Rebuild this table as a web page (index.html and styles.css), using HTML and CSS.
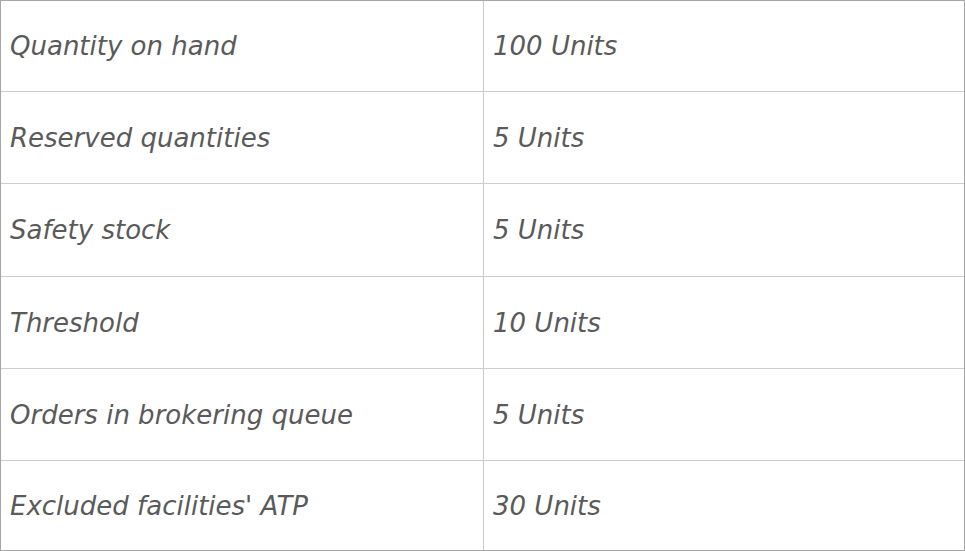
FILE: index.html
```html
<!DOCTYPE html>
<html>
<head>
<meta charset="utf-8">
<link rel="stylesheet" href="styles.css">
</head>
<body>
<div class="atp-grid">
  <div class="cell label">Quantity on hand</div><div class="cell value">100 Units</div>
  <div class="cell label">Reserved quantities</div><div class="cell value">5 Units</div>
  <div class="cell label">Safety stock</div><div class="cell value">5 Units</div>
  <div class="cell label">Threshold</div><div class="cell value">10 Units</div>
  <div class="cell label">Orders in brokering queue</div><div class="cell value">5 Units</div>
  <div class="cell label last">Excluded facilities' ATP</div><div class="cell value last">30 Units</div>
</div>
</body>
</html>
```
FILE: styles.css
```css
html, body {
  margin: 0;
  padding: 0;
  background: #ffffff;
}
.atp-grid {
  box-sizing: border-box;
  width: 965px;
  height: 551px;
  border: 1px solid #a6a6a6;
  display: grid;
  grid-template-columns: 483px 1fr;
  grid-template-rows: 91px 92px 93px 92px 92px 1fr;
  font-family: "DejaVu Sans", sans-serif;
  font-style: italic;
  font-size: 26px;
  color: #5a5a5a;
}
.cell {
  box-sizing: border-box;
  display: flex;
  align-items: center;
  padding: 0 0 0 9px;
  border-bottom: 1px solid #cccccc;
  white-space: nowrap;
}
.cell.label {
  border-right: 1px solid #cccccc;
}
.cell.value {
  padding-left: 9px;
}
.cell.last {
  border-bottom: none;
}
```
